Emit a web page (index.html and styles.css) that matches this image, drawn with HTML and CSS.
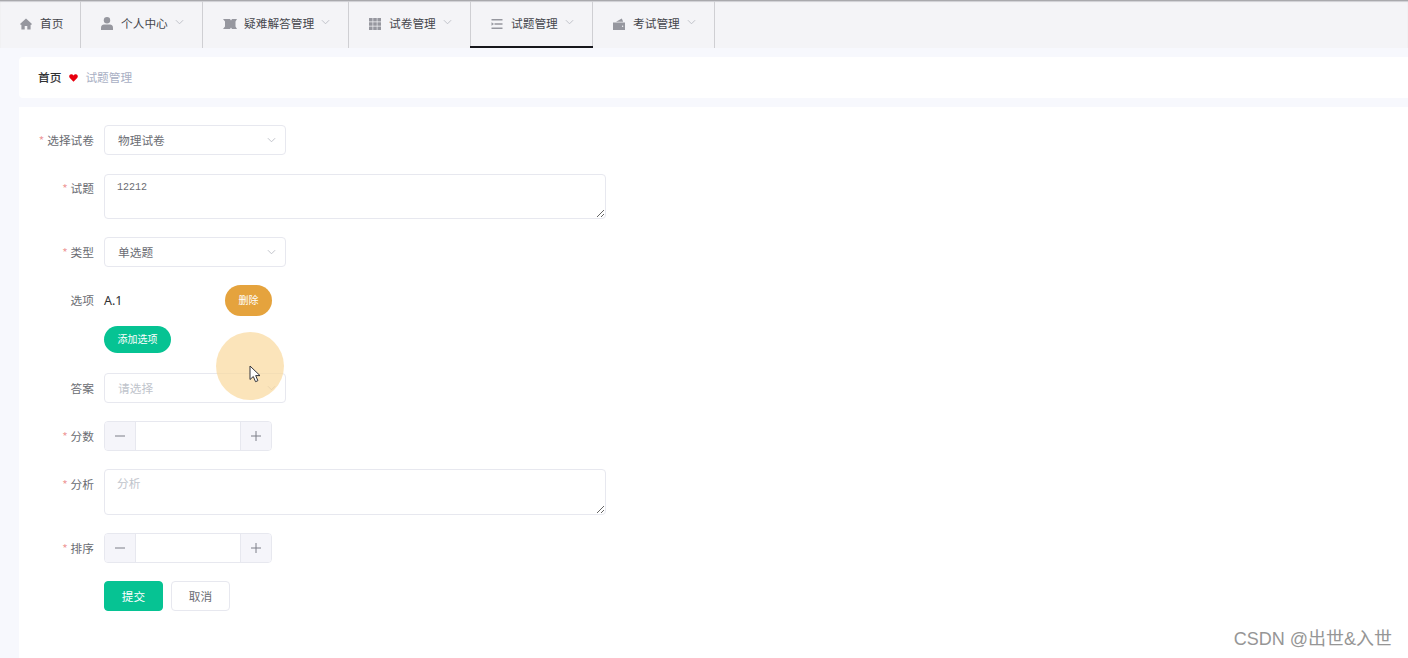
FILE: index.html
```html
<!DOCTYPE html>
<html lang="zh-CN">
<head>
<meta charset="utf-8">
<title>试题管理</title>
<link rel="stylesheet" href="styles.css">
</head>
<body>
<nav class="nav">
  <a class="tab tab-home">
    <svg class="ico" viewBox="0 0 12 12"><path d="M6 .6 0 6l1 1 .4-.3v4.900h3.300V8h2.600v3.600h3.300V6.700L11 7l1-1z"/></svg>
    <span>首页</span>
  </a>
  <a class="tab">
    <svg class="ico ico-tall" viewBox="0 0 12 13"><circle cx="6" cy="3.200" r="3.200"/><path d="M0 13v-2.600C0 8.600 1.600 7.500 3 7.500h6c1.400 0 3 1.100 3 2.900V13z"/></svg>
    <span>个人中心</span>
    <svg class="chev" viewBox="0 0 10 6"><path d="M1 1l4 4 4-4"/></svg>
  </a>
  <a class="tab tab-wide">
    <svg class="ico ico-wide" viewBox="0 0 14 10"><path d="M0 0h7l1 1.500L9 0h5l-1.500 2.500v5L14 10H9L8 8.500 7 10H0l2-2.500v-5z"/></svg>
    <span>疑难解答管理</span>
    <svg class="chev" viewBox="0 0 10 6"><path d="M1 1l4 4 4-4"/></svg>
  </a>
  <a class="tab">
    <svg class="ico" viewBox="0 0 12 12"><path d="M0 0h3.600v3.600H0zM4.200 0h3.600v3.600H4.200zM8.400 0H12v3.600H8.400zM0 4.200h3.600v3.600H0zM4.200 4.200h3.600v3.600H4.200zM8.400 4.200H12v3.600H8.400zM0 8.400h3.600V12H0zM4.200 8.400h3.600V12H4.200zM8.400 8.400H12V12H8.400z"/></svg>
    <span>试卷管理</span>
    <svg class="chev" viewBox="0 0 10 6"><path d="M1 1l4 4 4-4"/></svg>
  </a>
  <a class="tab tab-active">
    <svg class="ico" viewBox="0 0 12 12"><path d="M.5 1h11v1.600H.5zM3.500 5.200h8v1.600h-8zM.5 9.400h11V11H.5zM.5 4.200 3 6 .5 7.800z"/></svg>
    <span>试题管理</span>
    <svg class="chev" viewBox="0 0 10 6"><path d="M1 1l4 4 4-4"/></svg>
  </a>
  <a class="tab">
    <svg class="ico" viewBox="0 0 12 12"><path d="M0 4.400h12V12H0zM3 3.800 8.800.4l1.400 3.400zM8.400 7h3.600v2.400H8.400z"/><circle class="ico-hole" cx="9.600" cy="8.200" r=".7"/></svg>
    <span>考试管理</span>
    <svg class="chev" viewBox="0 0 10 6"><path d="M1 1l4 4 4-4"/></svg>
  </a>
</nav>

<main class="main">
  <div class="crumb">
    <span class="crumb-home">首页</span>
    <svg class="heart" viewBox="0 0 10 9"><path d="M5 8.600.9 4.600C-.3 3.300 0 1.200 1.600.6 2.900.1 4.200.6 5 1.700 5.800.6 7.100.1 8.400.6c1.600.6 1.900 2.700.7 4z"/></svg>
    <span class="crumb-cur">试题管理</span>
  </div>

  <form class="form">
    <div class="row">
      <label class="label"><i>*</i>选择试卷</label>
      <div class="select"><span>物理试卷</span><svg class="chev" viewBox="0 0 10 6"><path d="M1 1l4 4 4-4"/></svg></div>
    </div>
    <div class="row row-top row-first">
      <label class="label"><i>*</i>试题</label>
      <textarea class="area">12212</textarea>
    </div>
    <div class="row">
      <label class="label"><i>*</i>类型</label>
      <div class="select"><span>单选题</span><svg class="chev" viewBox="0 0 10 6"><path d="M1 1l4 4 4-4"/></svg></div>
    </div>
    <div class="row row-opt">
      <label class="label">选项</label>
      <span class="opt-text">A.1</span>
      <button type="button" class="pill pill-del">删除</button>
    </div>
    <div class="row row-add">
      <span class="label"></span>
      <button type="button" class="pill pill-add">添加选项</button>
    </div>
    <div class="row">
      <label class="label">答案</label>
      <div class="select select-empty"><span>请选择</span><svg class="chev" viewBox="0 0 10 6"><path d="M1 1l4 4 4-4"/></svg></div>
    </div>
    <div class="row">
      <label class="label"><i>*</i>分数</label>
      <div class="num">
        <button type="button" class="num-btn" aria-label="减少"><svg viewBox="0 0 10 10"><path d="M0 5h10"/></svg></button>
        <input class="num-input">
        <button type="button" class="num-btn num-plus" aria-label="增加"><svg viewBox="0 0 10 10"><path d="M0 5h10M5 0v10"/></svg></button>
      </div>
    </div>
    <div class="row row-top">
      <label class="label label-low"><i>*</i>分析</label>
      <textarea class="area area-tall" placeholder="分析"></textarea>
    </div>
    <div class="row">
      <label class="label"><i>*</i>排序</label>
      <div class="num">
        <button type="button" class="num-btn" aria-label="减少"><svg viewBox="0 0 10 10"><path d="M0 5h10"/></svg></button>
        <input class="num-input">
        <button type="button" class="num-btn num-plus" aria-label="增加"><svg viewBox="0 0 10 10"><path d="M0 5h10M5 0v10"/></svg></button>
      </div>
    </div>
    <div class="row row-actions">
      <span class="label"></span>
      <button type="button" class="btn btn-primary">提交</button>
      <button type="button" class="btn">取消</button>
    </div>
  </form>
</main>

<div class="spot"></div>
<svg class="cursor" viewBox="0 0 12 18"><path d="M1 1v13.500l3.300-3 2.200 5.200 2.400-1-2.200-5.100H11z"/></svg>
<div class="mark">CSDN @出世&amp;入世</div>
</body>
</html>
```
FILE: styles.css
```css
* { box-sizing: border-box; }
html, body { height: 100%; }
body {
  margin: 0;
  overflow: hidden;
  background: #f7f8fd;
  color: #6a6c72;
  font: 11.7px/1.2 "Noto Sans CJK SC", "Liberation Sans", sans-serif;
}

.nav {
  display: flex;
  height: 48px;
  background: #f4f4f7;
  border-top: 1px solid #a9a9ad;
  box-shadow: inset 0 1px 1px #cfcfd3;
}
.tab {
  display: flex;
  flex: none;
  align-items: center;
  gap: 8px;
  width: 122px;
  height: 47px;
  padding: 0 0 2px 20px;
  border-right: 1px solid #cfcfd3;
  color: #45464c;
}
.tab span { margin-top: -1px; }
.tab .chev { margin-left: -1px; margin-top: -3px; }
.tab-home { width: 81px; }
.tab-wide { width: 146px; }
.tab-active { position: relative; }
.tab-active::after {
  content: "";
  position: absolute;
  left: -1px;
  right: -1px;
  bottom: 0;
  height: 2px;
  background: #17171c;
}
.ico { width: 12px; height: 12px; fill: #96979f; flex: none; }
.ico-tall { height: 13px; }
.ico-wide { width: 14px; height: 10px; margin-right: -1px; }
.ico-hole { fill: #f4f4f7; }
.chev {
  width: 9px;
  height: 6px;
  flex: none;
  fill: none;
  stroke: #babcc4;
  stroke-width: 1;
}

.main { padding: 9px 0 0 19px; }
.crumb {
  display: flex;
  align-items: center;
  height: 41px;
  padding-left: 19px;
  background: #fff;
  border-radius: 4px 0 0 4px;
}
.crumb-home { color: #303133; font-weight: 500; }
.heart { width: 9px; height: 8px; margin: 0 7px 0 8px; fill: #e8000f; }
.crumb-cur { color: #a9b0c4; }

.form {
  display: flex;
  flex-direction: column;
  gap: 18px;
  height: 560px;
  margin-top: 9px;
  padding-top: 18px;
  background: #fff;
}
.row { display: flex; align-items: center; }
.row-first { margin-top: 1px; }
.row-top { align-items: flex-start; }
.row-top .label { padding-top: 7px; }
.row-top .label-low { padding-top: 8px; }
.label {
  flex: none;
  width: 85px;
  padding-right: 10px;
  text-align: right;
}
.label i { margin-right: 3px; color: #ee9a9a; font-style: normal; }

.select {
  display: flex;
  align-items: center;
  justify-content: space-between;
  width: 182px;
  height: 30px;
  padding: 0 9px 0 13px;
  background: #fff;
  border: 1px solid #e7e8ef;
  border-radius: 4px;
}
.select-empty { color: #c0c4cc; }

.area {
  display: block;
  width: 502px;
  height: 45px;
  padding: 7px 12px;
  color: #6a6c72;
  background: #fff;
  border: 1px solid #e7e8ef;
  border-radius: 4px;
  outline: 0;
  font: 10px/1.2 "Liberation Mono", monospace;
}
.area-tall { height: 46px; padding-top: 6px; }
.area::placeholder {
  color: #c0c4cc;
  font: 11.7px/1.2 "Noto Sans CJK SC", sans-serif;
}

.row-opt { height: 31px; }
.opt-text { width: 121px; color: #303133; font-size: 12.5px; font-family: "Noto Sans", sans-serif; }
.pill {
  border: 0;
  border-radius: 999px;
  color: #fff;
  padding: 0 0 1px;
  font: 10px/1 "Noto Sans CJK SC", sans-serif;
}
.pill-del { width: 47px; height: 31px; background: #e5a33d; }
.pill-add { width: 67px; height: 27px; background: #06c393; }
.row-add { margin-top: -8px; margin-bottom: 2px; }

.num {
  display: flex;
  width: 168px;
  height: 30px;
  border: 1px solid #e7e8ef;
  border-radius: 4px;
  overflow: hidden;
}
.num-btn {
  display: flex;
  flex: none;
  align-items: center;
  justify-content: center;
  width: 31px;
  padding: 0;
  background: #f5f5fa;
  border: 0;
  border-right: 1px solid #e7e8ef;
}
.num-btn svg { width: 10px; height: 10px; fill: none; stroke: #7d7f88; stroke-width: 1; }
.num-plus { border-right: 0; border-left: 1px solid #e7e8ef; }
.num-input { flex: 1; min-width: 0; border: 0; outline: 0; }

.row-actions { gap: 8px; }
.row-actions .label { margin-right: -8px; }
.btn {
  width: 59px;
  height: 30px;
  padding: 0;
  color: #6a6c72;
  background: #fff;
  border: 1px solid #e7e8ef;
  border-radius: 4px;
  font: 11.7px/1 "Noto Sans CJK SC", sans-serif;
}
.btn-primary { color: #fff; background: #06c393; border-color: #06c393; }

.spot {
  position: absolute;
  left: 216px;
  top: 332px;
  width: 68px;
  height: 68px;
  border-radius: 50%;
  background: rgba(250, 217, 160, .72);
}
.cursor {
  position: absolute;
  left: 249px;
  top: 365px;
  width: 12px;
  height: 18px;
  fill: #fff;
  stroke: #33343a;
  stroke-width: 1;
}
.mark {
  position: absolute;
  right: 16px;
  top: 627px;
  color: #969696;
  font: 18px/24px "Liberation Sans", "Noto Sans CJK SC", sans-serif;
}
```
